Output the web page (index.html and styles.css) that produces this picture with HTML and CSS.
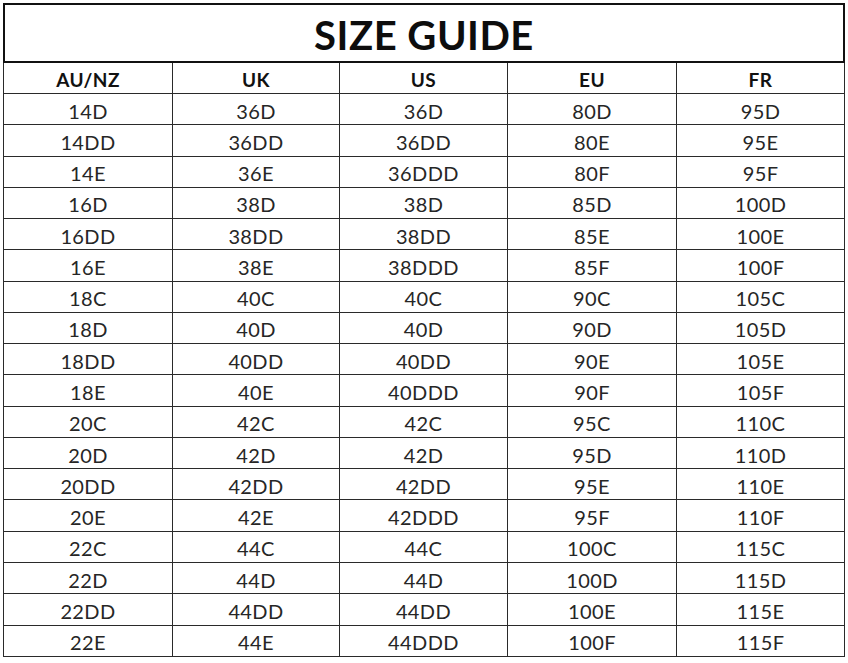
FILE: index.html
```html
<!DOCTYPE html>
<html>
<head>
<meta charset="utf-8">
<link rel="stylesheet" href="styles.css">
</head>
<body>
<div class="sheet">
  <div class="title">SIZE GUIDE</div>
  <div class="grid">
    <div class="cell head">AU/NZ</div><div class="cell head">UK</div><div class="cell head">US</div><div class="cell head">EU</div><div class="cell head">FR</div>
    <div class="cell">14D</div><div class="cell">36D</div><div class="cell">36D</div><div class="cell">80D</div><div class="cell">95D</div>
    <div class="cell">14DD</div><div class="cell">36DD</div><div class="cell">36DD</div><div class="cell">80E</div><div class="cell">95E</div>
    <div class="cell">14E</div><div class="cell">36E</div><div class="cell">36DDD</div><div class="cell">80F</div><div class="cell">95F</div>
    <div class="cell">16D</div><div class="cell">38D</div><div class="cell">38D</div><div class="cell">85D</div><div class="cell">100D</div>
    <div class="cell">16DD</div><div class="cell">38DD</div><div class="cell">38DD</div><div class="cell">85E</div><div class="cell">100E</div>
    <div class="cell">16E</div><div class="cell">38E</div><div class="cell">38DDD</div><div class="cell">85F</div><div class="cell">100F</div>
    <div class="cell">18C</div><div class="cell">40C</div><div class="cell">40C</div><div class="cell">90C</div><div class="cell">105C</div>
    <div class="cell">18D</div><div class="cell">40D</div><div class="cell">40D</div><div class="cell">90D</div><div class="cell">105D</div>
    <div class="cell">18DD</div><div class="cell">40DD</div><div class="cell">40DD</div><div class="cell">90E</div><div class="cell">105E</div>
    <div class="cell">18E</div><div class="cell">40E</div><div class="cell">40DDD</div><div class="cell">90F</div><div class="cell">105F</div>
    <div class="cell">20C</div><div class="cell">42C</div><div class="cell">42C</div><div class="cell">95C</div><div class="cell">110C</div>
    <div class="cell">20D</div><div class="cell">42D</div><div class="cell">42D</div><div class="cell">95D</div><div class="cell">110D</div>
    <div class="cell">20DD</div><div class="cell">42DD</div><div class="cell">42DD</div><div class="cell">95E</div><div class="cell">110E</div>
    <div class="cell">20E</div><div class="cell">42E</div><div class="cell">42DDD</div><div class="cell">95F</div><div class="cell">110F</div>
    <div class="cell">22C</div><div class="cell">44C</div><div class="cell">44C</div><div class="cell">100C</div><div class="cell">115C</div>
    <div class="cell">22D</div><div class="cell">44D</div><div class="cell">44D</div><div class="cell">100D</div><div class="cell">115D</div>
    <div class="cell">22DD</div><div class="cell">44DD</div><div class="cell">44DD</div><div class="cell">100E</div><div class="cell">115E</div>
    <div class="cell">22E</div><div class="cell">44E</div><div class="cell">44DDD</div><div class="cell">100F</div><div class="cell">115F</div>
  </div>
</div>
</body>
</html>
```
FILE: styles.css
```css
html, body {
  margin: 0;
  padding: 0;
  background: #ffffff;
}
body {
  padding: 3px;
  font-family: Lato, "Open Sans", sans-serif;
  color: #262626;
}
.sheet {
  width: 842px;
}
.title {
  box-sizing: border-box;
  height: 60px;
  border: 2px solid #111;
  display: flex;
  align-items: center;
  justify-content: center;
  font-weight: 700;
  font-size: 40px;
  letter-spacing: 0.5px;
  color: #0d0d0d;
  padding-top: 3px;
}
.grid {
  display: grid;
  grid-template-columns: 168px 166px 167px 168px 167px;
  grid-template-rows: 30px repeat(18, 30.28px);
  gap: 1px;
  padding: 0 1px 1px 1px;
  background: #2a2a2a;
}
.cell {
  background: #fff;
  display: flex;
  align-items: center;
  justify-content: center;
  font-size: 20px;
  letter-spacing: 0.4px;
  padding-top: 3px;
}
.head {
  font-weight: 700;
  font-size: 19px;
  color: #111;
}
```
